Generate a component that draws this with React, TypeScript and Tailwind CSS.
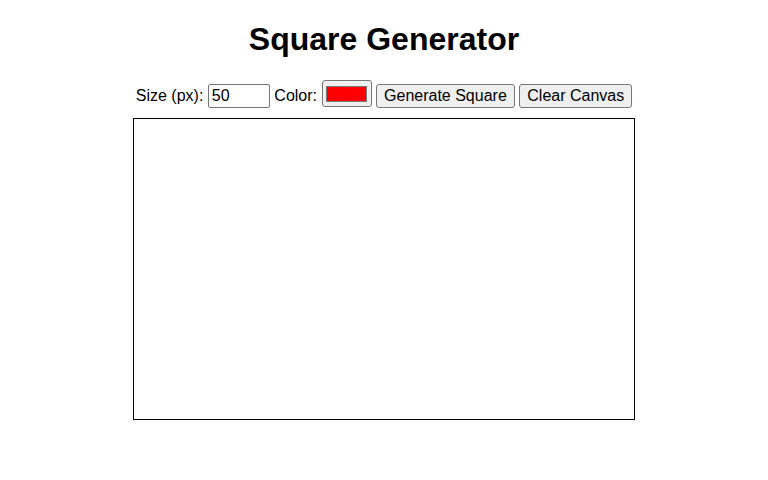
export default function App() {
  return (
    <div className="min-h-[480px] bg-white pt-[21px] font-['Liberation_Sans',Arial,sans-serif] text-black">
      <h1 className="text-center text-[32px] font-bold leading-[37px]">Square Generator</h1>

      <div className="mt-[24px] flex h-[28px] items-center justify-center gap-[4.5px] text-[16px] leading-[18px]">
        <span>Size (px):</span>
        <input
          type="text"
          defaultValue="50"
          className="h-[24px] w-[62px] rounded-[2px] border border-[#767676] bg-white px-[3px] text-[16px] outline-none"
        />
        <span>Color:</span>
        <button className="mb-[5px] flex h-[27px] w-[50px] items-center justify-center rounded-[3px] border border-[#767676] bg-[#efefef]">
          <span className="block h-[16px] w-[41px] border border-[#777] bg-[#ff0000]" />
        </button>
        <button className="h-[24px] rounded-[3px] border border-[#767676] bg-[#efefef] px-[7px] text-[16px]">
          Generate Square
        </button>
        <button className="h-[24px] rounded-[3px] border border-[#767676] bg-[#efefef] px-[7px] text-[16px]">
          Clear Canvas
        </button>
      </div>

      <div className="mt-[8px] flex justify-center">
        <div className="h-[302px] w-[502px] border border-black bg-white" />
      </div>
    </div>
  );
}
